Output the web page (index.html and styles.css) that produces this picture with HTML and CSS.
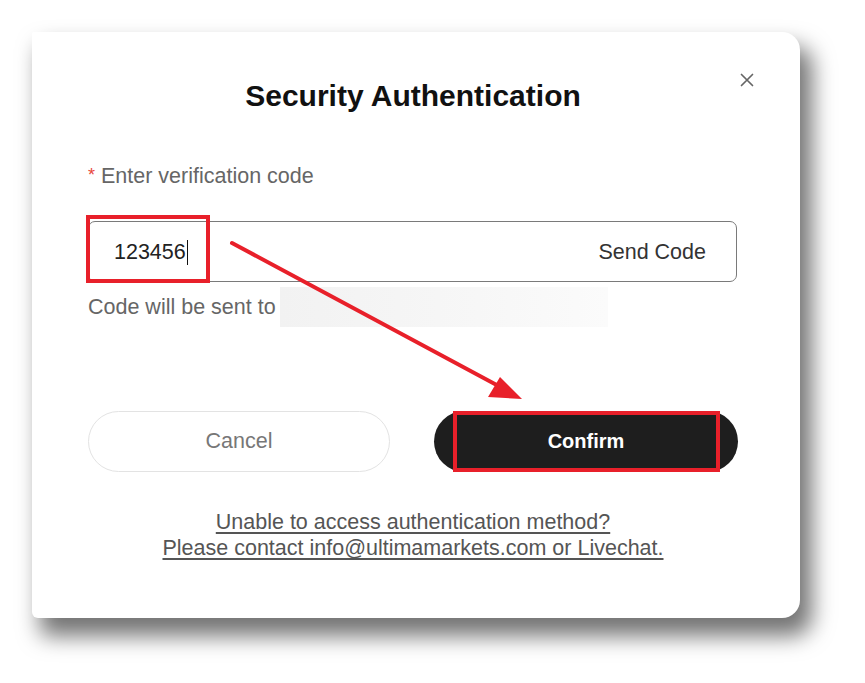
FILE: index.html
```html
<!DOCTYPE html>
<html>
<head>
<meta charset="utf-8">
<link rel="stylesheet" href="styles.css">
</head>
<body>
<div class="dialog">
  <button class="close" aria-label="close">
    <svg width="16" height="16" viewBox="0 0 16 16"><path d="M2.5 2.5L13.5 13.5M13.5 2.5L2.5 13.5" stroke="#666" stroke-width="1.7" stroke-linecap="round"/></svg>
  </button>
  <h1 class="title">Security Authentication</h1>
  <div class="label"><span class="req">*</span> Enter verification code</div>
  <div class="field">
    <span class="value">123456<span class="caret"></span></span>
    <span class="send">Send Code</span>
    <span class="mark mark-input"></span>
  </div>
  <div class="hint">Code will be sent to <span class="blur"></span></div>
  <div class="actions">
    <button class="btn cancel">Cancel</button>
    <button class="btn confirm">Confirm<span class="mark mark-confirm"></span></button>
  </div>
  <div class="links">
    <a>Unable to access authentication method?</a>
    <a>Please contact info@ultimamarkets.com or Livechat.</a>
  </div>
  <svg class="arrow" width="865" height="683" viewBox="0 0 865 683">
    <line x1="232" y1="243" x2="506" y2="390" stroke="#e8202a" stroke-width="4" stroke-linecap="round"/>
    <polygon points="522,399 488,397 500,377" fill="#e8202a"/>
  </svg>
</div>
</body>
</html>
```
FILE: styles.css
```css
html, body {
  margin: 0;
  padding: 0;
  background: #ffffff;
}
body {
  font-family: "Liberation Sans", Arial, sans-serif;
  padding: 32px 0 0 32px;
  height: 683px;
  box-sizing: border-box;
  overflow: hidden;
}
.dialog {
  width: 768px;
  height: 586px;
  box-sizing: border-box;
  padding: 0 62px 0 56px;
  background: #ffffff;
  border-radius: 2px 18px 18px 6px;
  box-shadow: 10px 16px 22px 2px rgba(0,0,0,0.55);
  display: flex;
  flex-direction: column;
}
.close {
  position: absolute;
  left: 739px;
  top: 72px;
  border: 0;
  background: none;
  padding: 0;
  width: 16px;
  height: 16px;
}
.title {
  margin: 44px 0 0 0;
  text-align: center;
  font-size: 30px;
  line-height: 40px;
  font-weight: bold;
  color: #111;
}
.label {
  margin-top: 46px;
  font-size: 21.5px;
  line-height: 26px;
  color: #666;
}
.req {
  color: #e8463c;
  font-size: 18px;
  vertical-align: 2px;
}
.field {
  position: relative;
  margin-top: 32px;
  height: 61px;
  width: 649px;
  box-sizing: border-box;
  border: 1.5px solid #7a7a7a;
  border-radius: 7px;
  display: flex;
  align-items: center;
  justify-content: space-between;
  padding: 0 30px 0 25px;
  font-size: 21.5px;
  color: #222;
}
.value {
  display: inline-flex;
  align-items: center;
  padding-top: 2px;
}
.caret {
  display: inline-block;
  width: 1.5px;
  height: 25px;
  background: #111;
  margin-left: 1px;
}
.send {
  color: #333;
  padding-top: 2px;
}
.mark {
  position: absolute;
  border: 4px solid #e8202a;
  box-sizing: border-box;
}
.mark-input {
  left: -3px;
  top: -7px;
  width: 124px;
  height: 68px;
}
.hint {
  margin-top: 5px;
  font-size: 21.5px;
  line-height: 40px;
  color: #666;
  display: flex;
  align-items: center;
  gap: 4px;
}
.blur {
  display: inline-block;
  width: 328px;
  height: 40px;
  background: linear-gradient(90deg, #f2f2f2, #f7f7f7 60%, #fbfbfb);
}
.actions {
  margin-top: 84px;
  display: flex;
  justify-content: space-between;
  width: 650px;
}
.btn {
  width: 302px;
  height: 61px;
  border-radius: 31px;
  font-family: "Liberation Sans", Arial, sans-serif;
  font-size: 21.5px;
  position: relative;
  box-sizing: border-box;
}
.cancel {
  background: #fff;
  border: 1.5px solid #e3e3e3;
  color: #777;
}
.confirm {
  background: #1e1e1e;
  border: 0;
  color: #fff;
  font-weight: bold;
  font-size: 20px;
  width: 304px;
}
.mark-confirm {
  left: 19px;
  top: 0;
  width: 267px;
  height: 61px;
}
.links {
  margin-top: 37px;
  display: flex;
  flex-direction: column;
  align-items: center;
  font-size: 21.5px;
  line-height: 26px;
  color: #555;
}
.links a {
  text-decoration: underline;
  text-underline-offset: 3px;
}
.arrow {
  position: absolute;
  left: 0;
  top: 0;
  pointer-events: none;
}
```
